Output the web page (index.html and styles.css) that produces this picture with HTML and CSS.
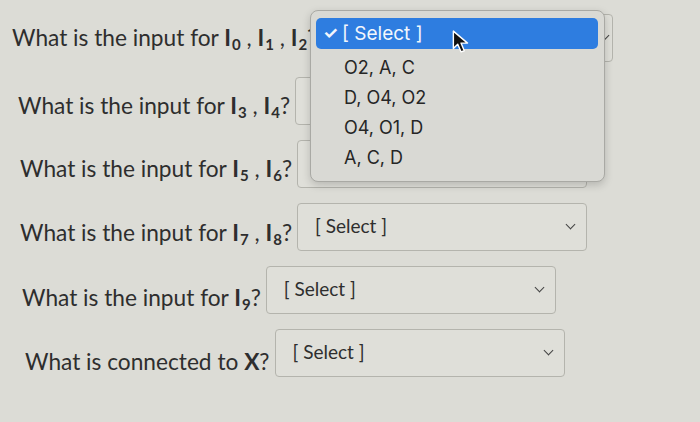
FILE: index.html
```html
<!DOCTYPE html>
<html>
<head>
<meta charset="utf-8">
<link rel="stylesheet" href="styles.css">
</head>
<body>
<div class="page">
  <div class="row r1">
    <span class="label">What is the input for <b>I<sub>0</sub></b> , <b>I<sub>1</sub></b> , <b>I<sub>2</sub></b>?</span>
    <div class="select wide"><span class="val">[ Select ]</span><span class="chev"></span></div>
  </div>
  <div class="row r2">
    <span class="label">What is the input for <b>I<sub>3</sub></b> , <b>I<sub>4</sub></b>?</span>
    <div class="select"><span class="val">[ Select ]</span><span class="chev"></span></div>
  </div>
  <div class="row r3">
    <span class="label">What is the input for <b>I<sub>5</sub></b> , <b>I<sub>6</sub></b>?</span>
    <div class="select"><span class="val">[ Select ]</span><span class="chev"></span></div>
  </div>
  <div class="row r4">
    <span class="label">What is the input for <b>I<sub>7</sub></b> , <b>I<sub>8</sub></b>?</span>
    <div class="select"><span class="val">[ Select ]</span><span class="chev"></span></div>
  </div>
  <div class="row r5">
    <span class="label">What is the input for <b>I<sub>9</sub></b>?</span>
    <div class="select"><span class="val">[ Select ]</span><span class="chev"></span></div>
  </div>
  <div class="row r6">
    <span class="label">What is connected to <b>X</b>?</span>
    <div class="select"><span class="val">[ Select ]</span><span class="chev"></span></div>
  </div>

  <div class="menu">
    <div class="opt active"><span class="check">✓</span>[ Select ]</div>
    <div class="opt">O2, A, C</div>
    <div class="opt">D, O4, O2</div>
    <div class="opt">O4, O1, D</div>
    <div class="opt">A, C, D</div>
  </div>
  <svg class="cursor" width="18" height="24" viewBox="0 0 16 22">
    <path d="M1 1 L1 17 L5 13 L8 20 L11 19 L8 12 L14 12 Z" fill="#111" stroke="#fff" stroke-width="1.3" stroke-linejoin="round"/>
  </svg>
</div>
</body>
</html>
```

FILE: styles.css
```css
html, body {
  margin: 0;
  padding: 0;
}
body {
  width: 700px;
  height: 422px;
  overflow: hidden;
  background: #dcdcd6;
  font-family: Lato, "Liberation Sans", sans-serif;
  color: #2e2e2e;
}
.page {
  position: relative;
  padding-top: 6px;
}
.row {
  height: 63px;
  display: flex;
  align-items: center;
  gap: 5px;
}
.label {
  font-size: 22.7px;
  white-space: nowrap;
  margin-top: 12px;
}
.label b {
  font-weight: 700;
}
.label sub {
  font-size: 15px;
  vertical-align: -4px;
  line-height: 0;
  margin-left: 1px;
}
.r1 { padding-left: 12px; }
.r1 .label { margin-top: 0; }
.r2 { padding-left: 18px; }
.r2 .label { margin-top: 9px; }
.r3 { padding-left: 20px; }
.r3 .label { margin-top: 9px; }
.r4 { padding-left: 20px; }
.r5 { padding-left: 22px; }
.r5 .label { margin-top: 16px; }
.r6 { padding-left: 25px; }
.r6 .label { margin-top: 18px; }

.select {
  width: 290px;
  height: 48px;
  border: 1px solid #b4b4ad;
  border-radius: 4px;
  background: #dfdfd9;
  display: flex;
  align-items: center;
  justify-content: space-between;
  padding: 0 12px 0 17px;
  box-sizing: border-box;
  font-size: 19px;
  color: #2e2e2e;
}
.select.wide {
  width: 291px;
  padding-right: 4px;
}
.val {
  margin-top: -2px;
}
.chev {
  width: 6px;
  height: 6px;
  border-right: 1.5px solid #444;
  border-bottom: 1.5px solid #444;
  transform: rotate(45deg);
  margin-top: -5px;
}

.menu {
  position: absolute;
  left: 310px;
  top: 10px;
  width: 295px;
  height: 172px;
  box-sizing: border-box;
  background: #d9d9d4;
  border: 1px solid #a9a9a4;
  border-radius: 8px;
  box-shadow: 0 3px 8px rgba(0, 0, 0, 0.18);
  padding: 7px 6px 0 5px;
  font-family: Inter, "Open Sans", sans-serif;
  font-size: 18px;
  color: #262626;
}
.opt {
  height: 30px;
  line-height: 30px;
  padding-left: 28px;
  position: relative;
}
.opt.active {
  height: 31px;
  line-height: 31px;
  background: #2e7de0;
  color: #f2f6fc;
  border-radius: 5px;
  padding-left: 26px;
  margin-bottom: 4px;
  font-size: 19px;
}
.check {
  position: absolute;
  left: 7px;
  font-size: 17px;
  font-weight: 700;
}
.cursor {
  position: absolute;
  left: 452px;
  top: 30px;
}
```
